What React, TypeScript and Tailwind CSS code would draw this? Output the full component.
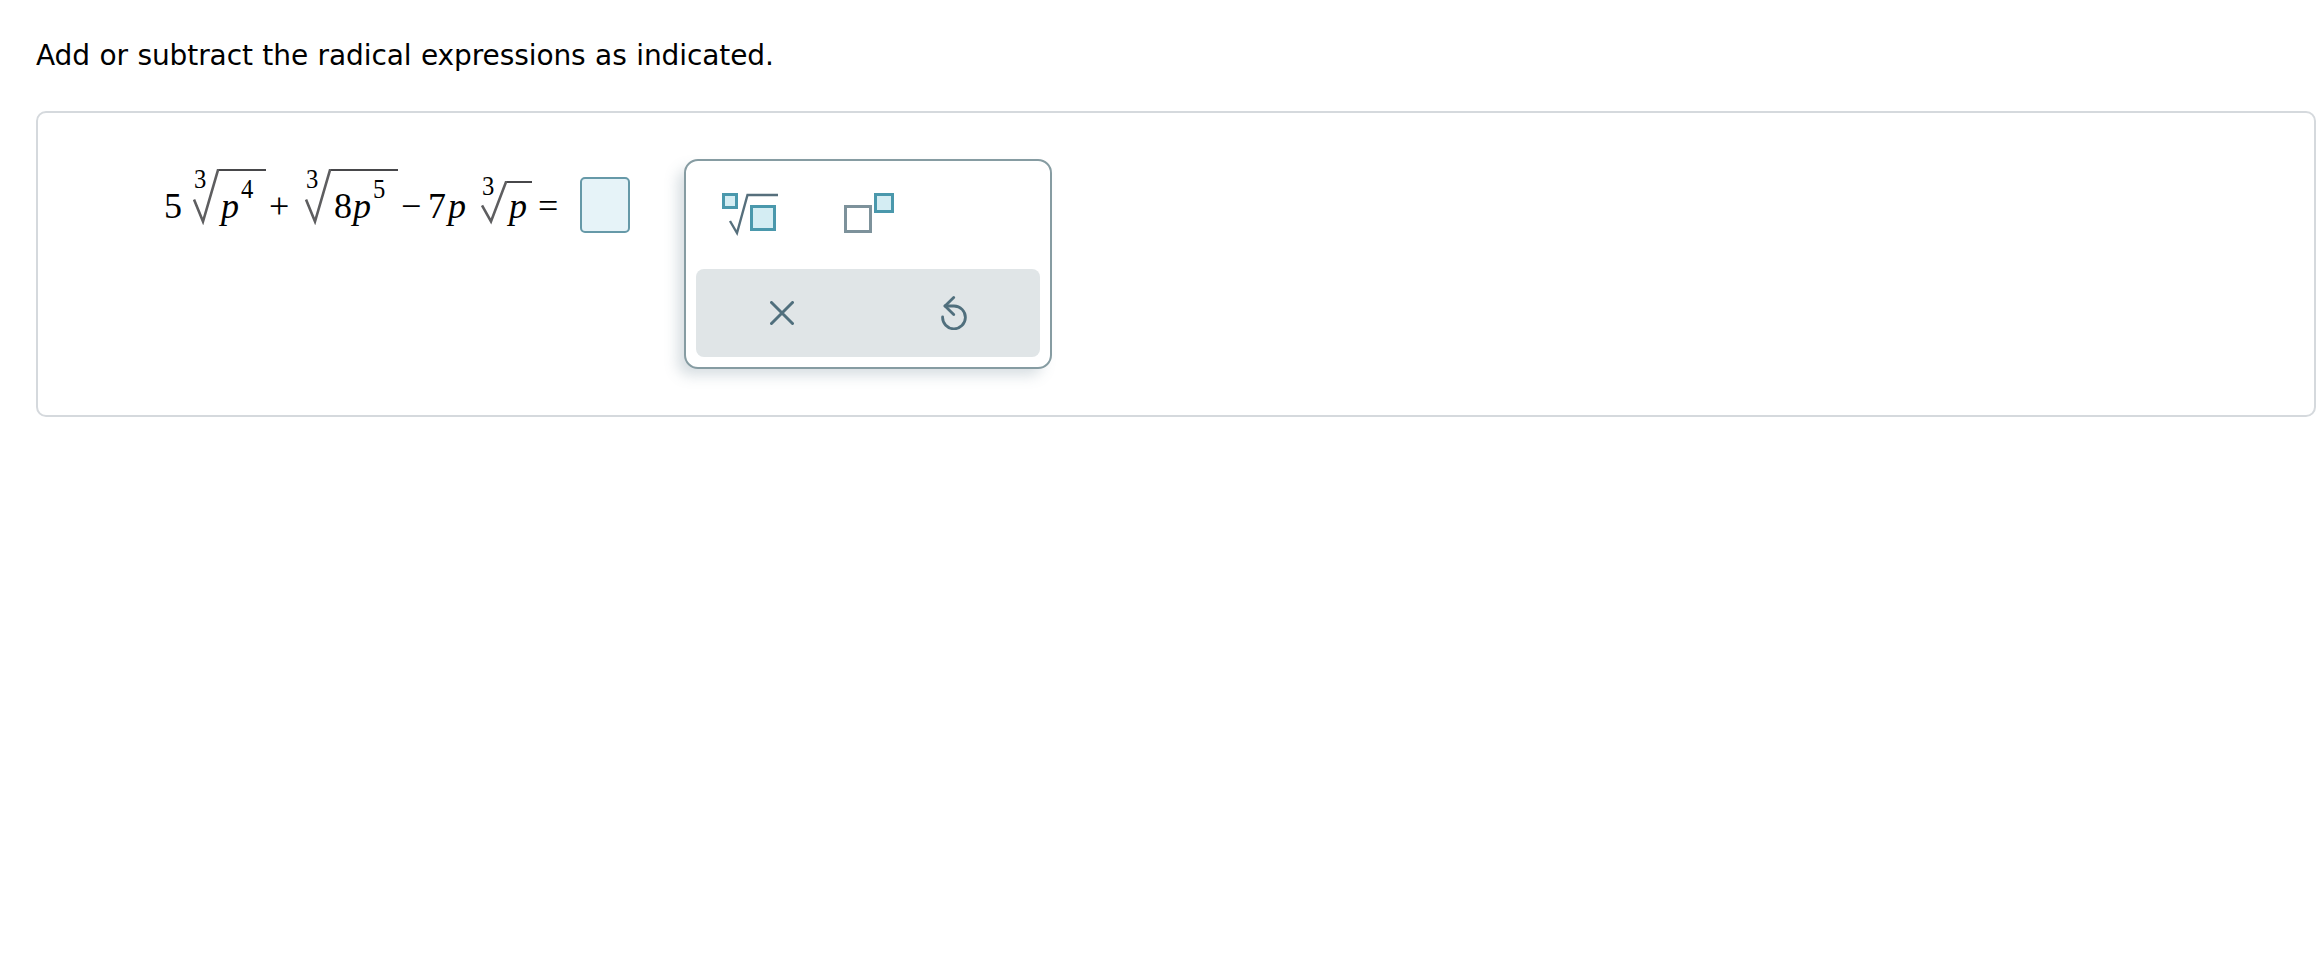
import React from "react";

type RadicalProps = {
  sign: string;
  height: number;
  index: string;
  className: string;
  indexClassName?: string;
  children: React.ReactNode;
};

const Radical = ({
  sign,
  height,
  index,
  className,
  indexClassName = "-top-1",
  children,
}: RadicalProps) => {
  return (
    <div className={`relative flex ${className}`}>
      <svg
        width="26"
        height={height}
        viewBox={`0 0 26 ${height}`}
        className="shrink-0"
        fill="none"
        stroke="#5e5e60"
        strokeWidth="2.6"
      >
        <path d={sign} />
      </svg>
      <span
        className={`absolute left-px origin-left scale-x-[0.88] text-[28px] leading-7 ${indexClassName}`}
      >
        {index}
      </span>
      <div className="flex flex-1 border-t-2 border-[#47474a]">{children}</div>
    </div>
  );
};

const RootIcon = () => (
  <svg width="58" height="44" viewBox="0 0 58 44" fill="none">
    <rect x="1.5" y="1.5" width="13" height="13" fill="#d4edf3" stroke="#4a98ac" strokeWidth="3" />
    <path d="M8 28 L15 40 L25.5 2 H56" stroke="#566f7c" strokeWidth="2.4" />
    <rect x="29.5" y="13.5" width="23" height="23" fill="#d4edf3" stroke="#4a98ac" strokeWidth="3" />
  </svg>
);

const PowerIcon = () => (
  <svg width="50" height="44" viewBox="0 0 50 44" fill="none">
    <rect x="1.5" y="13.5" width="25" height="25" stroke="#7d929b" strokeWidth="3" />
    <rect x="31.5" y="1.5" width="17" height="17" fill="#d4edf3" stroke="#4a98ac" strokeWidth="3" />
  </svg>
);

const ClearIcon = () => (
  <svg width="24" height="24" viewBox="0 0 24 24" fill="none" stroke="#506f7d" strokeWidth="3" strokeLinecap="round">
    <path d="M1.5 1.5 L22.5 22.5 M22.5 1.5 L1.5 22.5" />
  </svg>
);

const UndoIcon = () => (
  <svg
    width="26"
    height="34"
    viewBox="0 0 26 34"
    fill="none"
    stroke="#506f7d"
    strokeWidth="2.8"
    strokeLinecap="round"
    strokeLinejoin="round"
  >
    <path d="M12.7 1.5 L4 10 L12.7 18.5" />
    <path d="M4 10 H13 A11.4 11.4 0 1 1 1.6 21" />
  </svg>
);

const App = () => {
  return (
    <div className="h-[960px] w-[2324px] overflow-hidden bg-white pl-9 pr-2 pt-[37px] text-black">
      <h1 className="h-[74px] whitespace-nowrap font-['DejaVu_Sans',sans-serif] text-[28px] leading-[38px] tracking-[-0.09px] [word-spacing:0.7px]">
        Add or subtract the radical expressions as indicated.
      </h1>

      <div className="flex h-[306px] items-start rounded-[10px] border-2 border-[#d5d9dd]">
        <div className="ml-[126px] mt-14 flex items-start whitespace-nowrap font-['Liberation_Serif',serif] text-[36px] leading-9">
          <span className="mt-[19px] w-[18px]">5</span>
          <Radical className="ml-[11px] w-[73px]" height={56} index="3" sign="M1 30.5 L10 52.5 L25 1 H26">
            <i className="ml-[2px] mt-[17px] w-[18px]">p</i>
            <span className="ml-[2px] mt-1 origin-left scale-x-[0.88] text-[28px] leading-7">4</span>
          </Radical>
          <span className="ml-[3px] mt-[19px] w-5">+</span>
          <Radical className="ml-4 w-[93px]" height={56} index="3" sign="M1 30.5 L10 52.5 L25 1 H26">
            <span className="ml-[3px] mt-[17px] w-[18px]">8</span>
            <i className="ml-px mt-[17px] w-[18px]">p</i>
            <span className="ml-[2px] mt-1 origin-left scale-x-[0.88] text-[28px] leading-7">5</span>
          </Radical>
          <span className="ml-[3px] mt-[19px] w-5">−</span>
          <span className="ml-[7px] mt-[19px] w-[18px]">7</span>
          <i className="ml-[2px] mt-[19px] w-[18px]">p</i>
          <Radical
            className="ml-[15px] mt-3 w-[51px]"
            indexClassName="-top-[9px]"
            height={44}
            index="3"
            sign="M1 24.5 L10 40.5 L25 1 H26"
          >
            <i className="ml-[2px] mt-[5px] w-[18px]">p</i>
          </Radical>
          <span className="ml-[6px] mt-[19px] w-5">=</span>
          <div className="ml-[22px] mt-2 h-14 w-[50px] rounded-[5px] border-[2.5px] border-[#6699a8] bg-[#e6f3f8]" />
        </div>

        <div className="ml-[54px] mt-[46px] h-[210px] w-[368px] rounded-[14px] border-2 border-[#869ca2] bg-white px-2.5 pt-8 shadow-[-8px_8px_14px_-2px_rgba(90,120,135,0.25)]">
          <div className="flex h-[76px] items-start gap-16 pl-[26px]">
            <RootIcon />
            <PowerIcon />
          </div>
          <div className="grid h-[88px] grid-cols-2 place-items-center rounded-lg bg-[#e0e5e7]">
            <ClearIcon />
            <UndoIcon />
          </div>
        </div>
      </div>
    </div>
  );
};

export default App;
